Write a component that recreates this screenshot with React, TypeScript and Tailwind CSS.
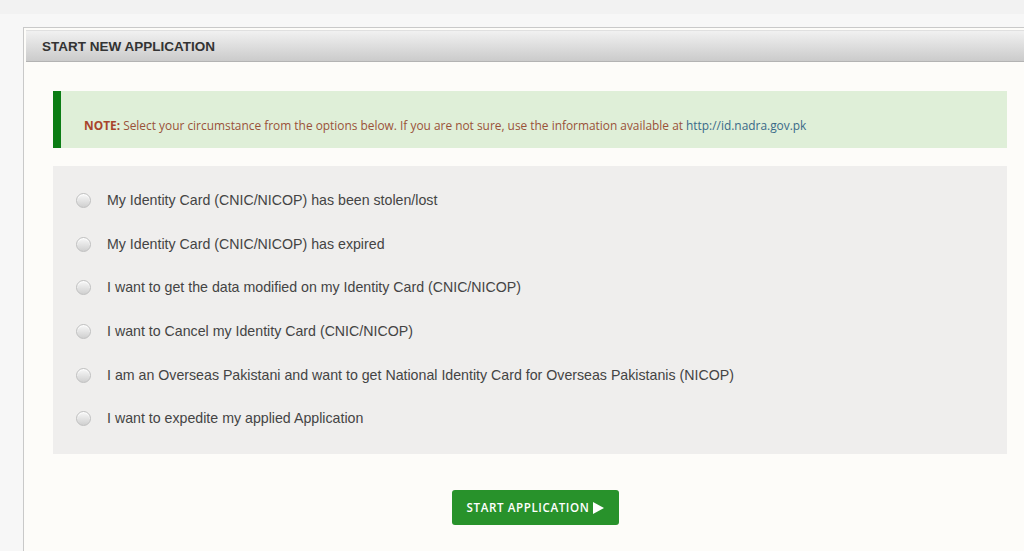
import React from "react";

const options = [
  "My Identity Card (CNIC/NICOP) has been stolen/lost",
  "My Identity Card (CNIC/NICOP) has expired",
  "I want to get the data modified on my Identity Card (CNIC/NICOP)",
  "I want to Cancel my Identity Card (CNIC/NICOP)",
  "I am an Overseas Pakistani and want to get National Identity Card for Overseas Pakistanis (NICOP)",
  "I want to expedite my applied Application",
];

export default function App() {
  return (
    <div className="w-full h-[551px] overflow-hidden bg-[#f7f7f7]">
      <div className="h-[14px] bg-[#f2f2f2]" />
      <div className="pl-[23px] pt-[13px]">
        <div className="w-[1020px] h-[600px] border border-[#c9c9c9] bg-[#fdfcf9] p-[2px]">
          <div className="h-[32px] flex items-center pl-[16px] pt-[2px] bg-gradient-to-b from-[#f1f1f1] to-[#cbcbcb] border-b border-[#b3b3b3] border-t border-t-[#e0e0e0]">
            <span className="text-[13.5px] font-bold text-[#333] font-['Liberation_Sans',Arial,sans-serif]">
              START NEW APPLICATION
            </span>
          </div>
          <div className="pl-[27px] pt-[29px]">
            <div className="w-[954px] h-[57px] flex items-center bg-[#dfefd8] border-l-[8px] border-[#0b7d14] pl-[23px] pt-[12px] font-['Open_Sans',sans-serif] text-[11.9px] text-[#9a5238]">
              <span>
                <b className="text-[#a8442b]">NOTE:</b> Select your circumstance from the options below. If you are not sure, use the information available at{" "}
                <span className="text-[#3a6a88]">http://id.nadra.gov.pk</span>
              </span>
            </div>
            <div className="w-[954px] h-[288px] mt-[18px] bg-[#efeeed] pt-[13px] pl-[23px]">
              {options.map((o) => (
                <div key={o} className="h-[43.6px] flex items-center">
                  <span className="w-[15px] h-[15px] rounded-full border border-[#c0c0c0] bg-gradient-to-b from-[#f8f8f8] to-[#d0d0d0] shadow-[inset_0_1px_1px_rgba(255,255,255,0.9)]" />
                  <span className="ml-[16px] text-[14.2px] text-[#444] font-['Liberation_Sans',Arial,sans-serif]">{o}</span>
                </div>
              ))}
            </div>
            <div className="pl-[399px] pt-[36px]">
              <button className="w-[167px] h-[35px] rounded-[3px] bg-[#28922b] text-white font-['Open_Sans',sans-serif] font-semibold text-[11.6px] tracking-[0.6px] flex items-center justify-center gap-[4px]">
                START APPLICATION
                <svg width="11" height="12" viewBox="0 0 11 12"><path d="M0 0 L11 6 L0 12 Z" fill="white" /></svg>
              </button>
            </div>
          </div>
        </div>
      </div>
    </div>
  );
}
